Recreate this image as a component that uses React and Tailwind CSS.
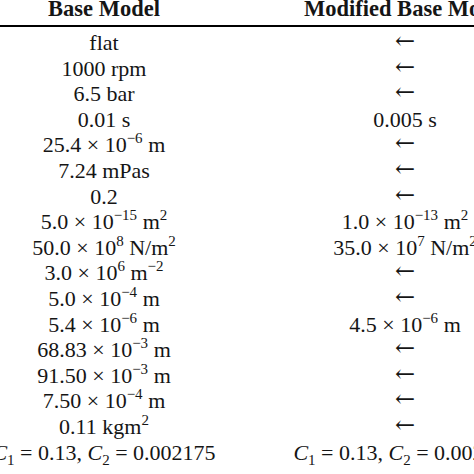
const Sup = ({ children }) => (
  <span className="relative -top-[9px] text-[15px] leading-none">{children}</span>
);

const Sub = ({ children }) => (
  <span className="relative top-[5px] text-[15px] leading-none">{children}</span>
);

const Sci = ({ base, exp, unit }) => (
  <>
    {base} × 10<Sup>{exp}</Sup> {unit}
  </>
);

const Coef = () => (
  <>
    <i>C</i>
    <Sub>1</Sub> = 0.13, <i>C</i>
    <Sub>2</Sub> = 0.002175
  </>
);

const arrow = (
  <span className="relative -top-[1px] font-['DejaVu_Serif',serif] text-[24px] font-light leading-none">←</span>
);

const rows = [
  ["flat", arrow],
  ["1000 rpm", arrow],
  ["6.5 bar", arrow],
  ["0.01 s", "0.005 s"],
  [<Sci base="25.4" exp="−6" unit="m" />, arrow],
  ["7.24 mPas", arrow],
  ["0.2", arrow],
  [
    <Sci base="5.0" exp="−15" unit={<>m<Sup>2</Sup></>} />,
    <Sci base="1.0" exp="−13" unit={<>m<Sup>2</Sup></>} />,
  ],
  [
    <Sci base="50.0" exp="8" unit={<>N/m<Sup>2</Sup></>} />,
    <Sci base="35.0" exp="7" unit={<>N/m<Sup>2</Sup></>} />,
  ],
  [<Sci base="3.0" exp="6" unit={<>m<Sup>−2</Sup></>} />, arrow],
  [<Sci base="5.0" exp="−4" unit="m" />, arrow],
  [<Sci base="5.4" exp="−6" unit="m" />, <Sci base="4.5" exp="−6" unit="m" />],
  [<Sci base="68.83" exp="−3" unit="m" />, arrow],
  [<Sci base="91.50" exp="−3" unit="m" />, arrow],
  [<Sci base="7.50" exp="−4" unit="m" />, arrow],
  [<>0.11 kgm<Sup>2</Sup></>, arrow],
  [<Coef />, <Coef />],
];

export default function App() {
  return (
    <div className="flex flex-col w-[474px] h-[474px] overflow-hidden bg-white text-[#151515] font-['Liberation_Serif',serif] text-[22px]">
      {/* header */}
      <div className="-mt-[2px] h-[27px] shrink-0 flex font-bold text-[22.5px] leading-[22px] whitespace-nowrap">
        <div className="w-[208px] shrink-0 text-center">Base Model</div>
        <div className="w-[202px] shrink-0 ml-[96px] text-center">Modified Base Model</div>
      </div>
      <div className="h-[2px] shrink-0 bg-black" />

      {/* body */}
      <div className="pt-[3px] shrink-0">
        {rows.map(([a, b], i) => (
          <div key={i} className="flex h-[25.6px] leading-[25.6px] whitespace-nowrap">
            <div className="w-[208px] shrink-0 flex justify-center">
              <span>{a}</span>
            </div>
            <div className="w-[202px] shrink-0 ml-[96px] flex justify-center">
              <span>{b}</span>
            </div>
          </div>
        ))}
      </div>
    </div>
  );
}
